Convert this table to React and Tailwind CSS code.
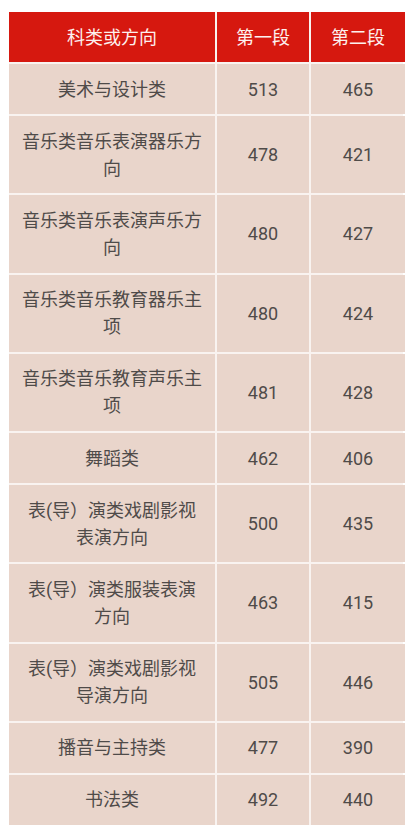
import React from "react";

const rows = [
  ["美术与设计类", "513", "465"],
  ["音乐类音乐表演器乐方向", "478", "421"],
  ["音乐类音乐表演声乐方向", "480", "427"],
  ["音乐类音乐教育器乐主项", "480", "424"],
  ["音乐类音乐教育声乐主项", "481", "428"],
  ["舞蹈类", "462", "406"],
  ["表(导）演类戏剧影视表演方向", "500", "435"],
  ["表(导）演类服装表演方向", "463", "415"],
  ["表(导）演类戏剧影视导演方向", "505", "446"],
  ["播音与主持类", "477", "390"],
  ["书法类", "492", "440"],
];

export default function App() {
  return (
    <div
      className="w-[412px] h-[836px] bg-white pt-[12px] px-[9px]"
      style={{ fontFamily: 'Roboto, "Noto Sans CJK SC", sans-serif' }}
    >
      <div className="grid grid-cols-[206px_92px_94px] gap-[2px] bg-[#f9f3f0]">
        <div className="h-[50px] flex items-center justify-center bg-[#d6180f] text-[#fdf0ee] text-[18px] font-normal">
          科类或方向
        </div>
        <div className="h-[50px] flex items-center justify-center bg-[#d6180f] text-[#fdf0ee] text-[18px] font-normal">
          第一段
        </div>
        <div className="h-[50px] flex items-center justify-center bg-[#d6180f] text-[#fdf0ee] text-[18px] font-normal">
          第二段
        </div>
        {rows.map((r, i) => (
          <React.Fragment key={i}>
            <div className="bg-[#e9d5cb] px-[12px] py-[11.6px] flex items-center justify-center text-center text-[18px] leading-[27px] text-[#4f4b49]">
              {r[0]}
            </div>
            <div className="bg-[#e9d5cb] flex items-center justify-center text-[18px] leading-[27px] text-[#4f4b49]">
              {r[1]}
            </div>
            <div className="bg-[#e9d5cb] flex items-center justify-center text-[18px] leading-[27px] text-[#4f4b49]">
              {r[2]}
            </div>
          </React.Fragment>
        ))}
      </div>
    </div>
  );
}
